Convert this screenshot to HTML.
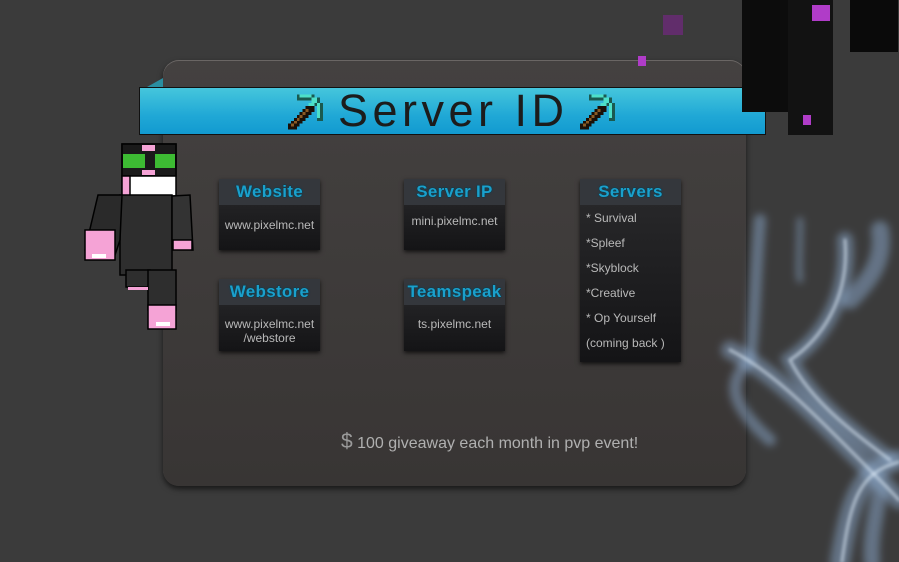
<!DOCTYPE html>
<html><head><meta charset="utf-8"><style>
*{margin:0;padding:0;box-sizing:border-box}
body{width:899px;height:562px;overflow:hidden;background:#3b3b3b;position:relative;font-family:"Liberation Sans",sans-serif}
.abs{position:absolute}
.panel{left:163px;top:60px;width:583px;height:426px;border-radius:16px;background:linear-gradient(180deg,#444140,#383534);box-shadow:0 3px 6px rgba(0,0,0,.6),inset 0 1px 0 #6a6664}
.banner{left:139px;top:87px;width:627px;height:48px;background:linear-gradient(180deg,#45c6dc,#20a8d6 60%,#129ad0);border:1px solid #111}
.title{left:338px;top:86px;font-size:45px;color:#1c1c1c;line-height:50px;letter-spacing:4.5px;white-space:nowrap}
.tri{left:147px;top:78px;width:0;height:0;border-left:16px solid transparent;border-bottom:9px solid #2a8ea0}
.box{background:linear-gradient(180deg,#2a2a2c,#141416);box-shadow:0 2px 4px rgba(0,0,0,.7);color:#b9b9b9;font-size:12px;text-align:center}
.box .h{height:26px;background:#34373c;color:#1aa0cc;font-size:17px;line-height:26px;text-shadow:0 0 2px #04506a,0 0 1px #000;letter-spacing:.3px;font-weight:bold}
.box .t{padding-top:13px;line-height:14px}
.srv{text-align:left;padding-left:6px}
.srv div{height:25px;line-height:25px}
</style></head><body>
<div class="abs panel"></div>
<div class="abs tri"></div>
<div class="abs banner"></div>
<div class="abs title">Server ID</div>
<svg class="abs" style="left:288px;top:94px" width="38" height="36" viewBox="0 0 13 12" shape-rendering="crispEdges">
<g fill="#1a1008"><rect x="0" y="10" width="3" height="2"/><rect x="1" y="9" width="3" height="2"/><rect x="2" y="8" width="3" height="2"/><rect x="3" y="7" width="3" height="2"/><rect x="4" y="6" width="3" height="2"/><rect x="5" y="5" width="3" height="2"/><rect x="6" y="4" width="3" height="2"/></g>
<g fill="#8a5a24"><rect x="1" y="10" width="1" height="1"/><rect x="2" y="9" width="1" height="1"/><rect x="3" y="8" width="1" height="1"/><rect x="4" y="7" width="1" height="1"/><rect x="5" y="6" width="1" height="1"/><rect x="6" y="5" width="1" height="1"/></g>
<g fill="#1a5a50"><rect x="3" y="0" width="6" height="2"/><rect x="8" y="1" width="3" height="3"/><rect x="10" y="3" width="2" height="6"/></g>
<g fill="#4de0c8"><rect x="4" y="0" width="4" height="1"/><rect x="8" y="1" width="2" height="2"/><rect x="10" y="3" width="1" height="5"/><rect x="7" y="3" width="2" height="1"/></g>
</svg>
<svg class="abs" style="left:580px;top:94px" width="38" height="36" viewBox="0 0 13 12" shape-rendering="crispEdges">
<g fill="#1a1008"><rect x="0" y="10" width="3" height="2"/><rect x="1" y="9" width="3" height="2"/><rect x="2" y="8" width="3" height="2"/><rect x="3" y="7" width="3" height="2"/><rect x="4" y="6" width="3" height="2"/><rect x="5" y="5" width="3" height="2"/><rect x="6" y="4" width="3" height="2"/></g>
<g fill="#8a5a24"><rect x="1" y="10" width="1" height="1"/><rect x="2" y="9" width="1" height="1"/><rect x="3" y="8" width="1" height="1"/><rect x="4" y="7" width="1" height="1"/><rect x="5" y="6" width="1" height="1"/><rect x="6" y="5" width="1" height="1"/></g>
<g fill="#1a5a50"><rect x="3" y="0" width="6" height="2"/><rect x="8" y="1" width="3" height="3"/><rect x="10" y="3" width="2" height="6"/></g>
<g fill="#4de0c8"><rect x="4" y="0" width="4" height="1"/><rect x="8" y="1" width="2" height="2"/><rect x="10" y="3" width="1" height="5"/><rect x="7" y="3" width="2" height="1"/></g>
</svg>

<div class="abs box" style="left:219px;top:179px;width:101px;height:71px"><div class="h">Website</div><div class="t">www.pixelmc.net</div></div>
<div class="abs box" style="left:404px;top:179px;width:101px;height:71px"><div class="h">Server IP</div><div class="t" style="padding-top:9px">mini.pixelmc.net</div></div>
<div class="abs box" style="left:219px;top:279px;width:101px;height:72px"><div class="h">Webstore</div><div class="t" style="padding-top:12px">www.pixelmc.net<br>/webstore</div></div>
<div class="abs box" style="left:404px;top:279px;width:101px;height:72px"><div class="h">Teamspeak</div><div class="t" style="padding-top:12px">ts.pixelmc.net</div></div>
<div class="abs box" style="left:580px;top:179px;width:101px;height:183px"><div class="h">Servers</div><div class="srv" style="padding-top:1px"><div>* Survival</div><div>*Spleef</div><div>*Skyblock</div><div>*Creative</div><div>* Op Yourself</div><div>(coming back )</div></div></div>

<div class="abs" style="left:341px;top:430px;color:#b0b0b0;font-size:16px"><span style="font-size:21px;color:#9a9a9a">$</span> 100 giveaway each month in pvp event!</div>

<svg class="abs" style="left:80px;top:140px" width="120" height="200" viewBox="0 0 120 200">
<g stroke="#000" stroke-width="1.5">
<rect x="42" y="4" width="54" height="52" fill="#fff"/>
<rect x="42" y="4" width="54" height="32" fill="#1a1a1a"/>
<rect x="42" y="36" width="8" height="20" fill="#f5a3d6"/>
<rect x="40" y="55" width="52" height="80" fill="#2e2e2e"/>
<polygon points="18,55 42,55 40,100 34,118 5,110" fill="#2a2a2a"/>
<rect x="5" y="90" width="30" height="30" fill="#f5a3d6"/>
<polygon points="92,56 110,55 113,110 92,108" fill="#333"/>
<rect x="93" y="100" width="19" height="10" fill="#f5a3d6"/>
<rect x="46" y="130" width="24" height="17" fill="#2e2e2e"/>
<rect x="68" y="130" width="28" height="40" fill="#2e2e2e"/>
<rect x="68" y="165" width="28" height="24" fill="#f5a3d6"/>
</g>
<rect x="43" y="14" width="22" height="14" fill="#3dbb33"/>
<rect x="75" y="14" width="20" height="14" fill="#3dbb33"/>
<rect x="62" y="5" width="13" height="6" fill="#f5a3d6"/>
<rect x="62" y="30" width="13" height="5" fill="#f5a3d6"/>
<rect x="48" y="147" width="20" height="3" fill="#f5a3d6"/>
<rect x="12" y="114" width="14" height="4" fill="#fff"/>
<rect x="76" y="182" width="14" height="4" fill="#fff"/>
</svg>

<div class="abs" style="left:742px;top:0;width:47px;height:112px;background:#0c0c0c"></div>
<div class="abs" style="left:788px;top:0;width:45px;height:135px;background:#121212"></div>
<div class="abs" style="left:850px;top:0;width:48px;height:52px;background:#0a0a0a"></div>
<div class="abs" style="left:812px;top:5px;width:18px;height:16px;background:#b03cc8"></div>
<div class="abs" style="left:803px;top:115px;width:8px;height:10px;background:#b03cc8"></div>
<div class="abs" style="left:663px;top:15px;width:20px;height:20px;background:#6c2a78;opacity:.8"></div>
<div class="abs" style="left:638px;top:56px;width:8px;height:10px;background:#b03cc8"></div>

<svg class="abs" style="left:700px;top:200px" width="199" height="362">
<defs><filter id="b"><feGaussianBlur stdDeviation="4"/></filter><filter id="c"><feGaussianBlur stdDeviation="1.5"/></filter></defs>
<g fill="none" stroke="rgba(150,185,225,.45)" filter="url(#b)" stroke-linecap="round">
<path d="M60 20 C55 80 55 120 50 160 C30 180 25 200 70 240" stroke-width="12"/>
<path d="M145 40 C150 100 120 140 90 160 C110 200 150 230 190 260" stroke-width="16"/>
<path d="M180 30 C185 60 170 80 150 100" stroke-width="18"/>
<path d="M30 150 C70 170 110 210 140 240 C170 270 190 290 199 300" stroke-width="18"/>
<path d="M199 260 C160 270 150 300 140 362" stroke-width="20"/>
<path d="M180 290 C175 320 170 340 172 362" stroke-width="16"/>
<path d="M100 20 C100 50 98 70 100 80" stroke-width="6"/>
</g>
<g fill="none" stroke="rgba(225,238,250,.6)" filter="url(#c)" stroke-linecap="round">
<path d="M145 40 C150 100 120 140 90 160 C110 200 150 230 190 260" stroke-width="3"/>
<path d="M30 150 C70 170 110 210 140 240 C170 270 190 290 199 300" stroke-width="3"/>
<path d="M199 262 C160 272 150 300 142 362" stroke-width="3"/>
</g>
</svg>
</body></html>
